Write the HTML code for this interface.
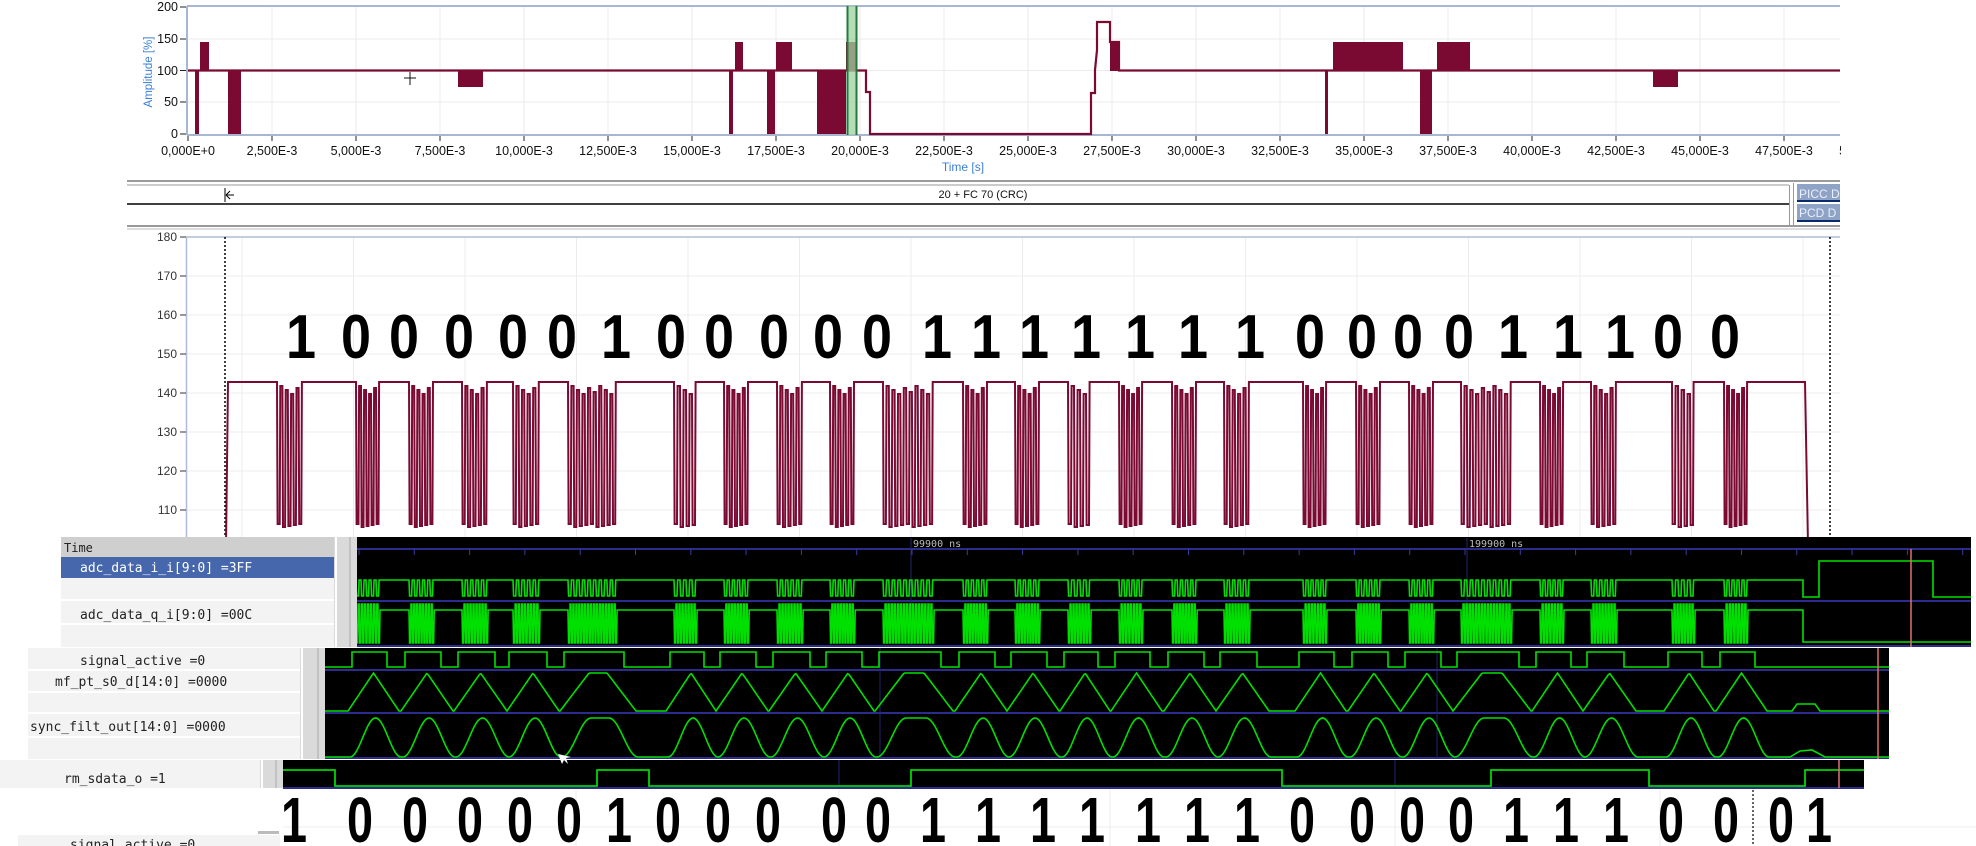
<!DOCTYPE html>
<html><head><meta charset="utf-8">
<style>
html,body{margin:0;padding:0;background:#fff;width:1976px;height:846px;overflow:hidden}
svg{display:block}
.ax{font-family:"Liberation Sans",sans-serif;font-size:12.5px;fill:#111}
.mono{font-family:"DejaVu Sans Mono","Liberation Mono",monospace;font-size:13px;fill:#222}
.big{font-family:"Liberation Sans",sans-serif;font-weight:bold;font-size:62px;fill:#000}
.big2{font-family:"Liberation Sans",sans-serif;font-weight:bold;font-size:64px;fill:#000}
</style></head>
<body>
<svg id="s" width="1976" height="846" viewBox="0 0 1976 846" xmlns="http://www.w3.org/2000/svg">
<defs>
<clipPath id="cTop"><rect x="0" y="0" width="1841" height="180"/></clipPath>
<clipPath id="cLow"><rect x="186" y="237" width="1654" height="300"/></clipPath>
<clipPath id="cP1"><rect x="357" y="549" width="1614" height="98"/></clipPath>
<clipPath id="cP2"><rect x="325" y="648" width="1564" height="111"/></clipPath>
<clipPath id="cP3"><rect x="283" y="760" width="1581" height="28"/></clipPath>
</defs>

<!-- ============ TOP CHART ============ -->
<g clip-path="url(#cTop)">
<g stroke="#ebebeb" stroke-width="1">
<line x1="188" y1="39" x2="1840" y2="39"/><line x1="188" y1="70.5" x2="1840" y2="70.5"/><line x1="188" y1="102" x2="1840" y2="102"/>
<line x1="272" y1="6" x2="272" y2="135"/><line x1="356" y1="6" x2="356" y2="135"/><line x1="440" y1="6" x2="440" y2="135"/><line x1="524" y1="6" x2="524" y2="135"/><line x1="608" y1="6" x2="608" y2="135"/><line x1="692" y1="6" x2="692" y2="135"/><line x1="776" y1="6" x2="776" y2="135"/><line x1="860" y1="6" x2="860" y2="135"/><line x1="944" y1="6" x2="944" y2="135"/><line x1="1028" y1="6" x2="1028" y2="135"/><line x1="1112" y1="6" x2="1112" y2="135"/><line x1="1196" y1="6" x2="1196" y2="135"/><line x1="1280" y1="6" x2="1280" y2="135"/><line x1="1364" y1="6" x2="1364" y2="135"/><line x1="1448" y1="6" x2="1448" y2="135"/><line x1="1532" y1="6" x2="1532" y2="135"/><line x1="1616" y1="6" x2="1616" y2="135"/><line x1="1700" y1="6" x2="1700" y2="135"/><line x1="1784" y1="6" x2="1784" y2="135"/>
</g>
<line x1="187" y1="6" x2="1840" y2="6" stroke="#a9b6d3" stroke-width="2"/>
<line x1="187" y1="135" x2="1840" y2="135" stroke="#a9b6d3" stroke-width="2"/>
<line x1="187" y1="6" x2="187" y2="135" stroke="#a9b6d3" stroke-width="2"/>
<g stroke="#222" stroke-width="1">
<line x1="180" y1="7" x2="186" y2="7"/><line x1="180" y1="39" x2="186" y2="39"/><line x1="180" y1="70.5" x2="186" y2="70.5"/><line x1="180" y1="102" x2="186" y2="102"/><line x1="180" y1="134" x2="186" y2="134"/>
<line x1="188" y1="136" x2="188" y2="141"/><line x1="272" y1="136" x2="272" y2="141"/><line x1="356" y1="136" x2="356" y2="141"/><line x1="440" y1="136" x2="440" y2="141"/><line x1="524" y1="136" x2="524" y2="141"/><line x1="608" y1="136" x2="608" y2="141"/><line x1="692" y1="136" x2="692" y2="141"/><line x1="776" y1="136" x2="776" y2="141"/><line x1="860" y1="136" x2="860" y2="141"/><line x1="944" y1="136" x2="944" y2="141"/><line x1="1028" y1="136" x2="1028" y2="141"/><line x1="1112" y1="136" x2="1112" y2="141"/><line x1="1196" y1="136" x2="1196" y2="141"/><line x1="1280" y1="136" x2="1280" y2="141"/><line x1="1364" y1="136" x2="1364" y2="141"/><line x1="1448" y1="136" x2="1448" y2="141"/><line x1="1532" y1="136" x2="1532" y2="141"/><line x1="1616" y1="136" x2="1616" y2="141"/><line x1="1700" y1="136" x2="1700" y2="141"/><line x1="1784" y1="136" x2="1784" y2="141"/>
</g>
<g class="ax" text-anchor="end">
<text x="178" y="11">200</text><text x="178" y="43">150</text><text x="178" y="75">100</text><text x="178" y="106">50</text><text x="178" y="138">0</text>
</g>
<text class="ax" transform="translate(152,72) rotate(-90)" text-anchor="middle" style="fill:#3b7fd4;font-size:11.5px">Amplitude [%]</text>
<g class="ax" text-anchor="middle">
<text x="188" y="155">0,000E+0</text><text x="272" y="155">2,500E-3</text><text x="356" y="155">5,000E-3</text><text x="440" y="155">7,500E-3</text><text x="524" y="155">10,000E-3</text><text x="608" y="155">12,500E-3</text><text x="692" y="155">15,000E-3</text><text x="776" y="155">17,500E-3</text><text x="860" y="155">20,000E-3</text><text x="944" y="155">22,500E-3</text><text x="1028" y="155">25,000E-3</text><text x="1112" y="155">27,500E-3</text><text x="1196" y="155">30,000E-3</text><text x="1280" y="155">32,500E-3</text><text x="1364" y="155">35,000E-3</text><text x="1448" y="155">37,500E-3</text><text x="1532" y="155">40,000E-3</text><text x="1616" y="155">42,500E-3</text><text x="1700" y="155">45,000E-3</text><text x="1784" y="155">47,500E-3</text><text x="1868" y="155">50,000E-3</text>
</g>
<text class="ax" x="963" y="171" text-anchor="middle" style="fill:#3b7fd4;font-size:12px">Time [s]</text>
<g fill="#7b0a32">
<rect x="195" y="70" width="4" height="64"/><rect x="200" y="42" width="9" height="29"/><rect x="228" y="70" width="13" height="64"/>
<rect x="458" y="70" width="25" height="17"/><rect x="729" y="70" width="4" height="64"/><rect x="735" y="42" width="8" height="29"/>
<rect x="767" y="70" width="8" height="64"/><rect x="776" y="42" width="16" height="29"/><rect x="817" y="70" width="29" height="64"/>
<rect x="846" y="42" width="10" height="29"/><rect x="1110" y="42" width="9" height="29"/><rect x="1325" y="70" width="3" height="64"/>
<rect x="1333" y="42" width="70" height="29"/><rect x="1420" y="70" width="12" height="64"/><rect x="1437" y="42" width="33" height="29"/>
<rect x="1653" y="70" width="25" height="17"/>
</g>
<path d="M188,70.5 H866 V92 H870 V134 H1091 V93 H1095 V70 L1097,50 V22 H1110 V42 H1119 V70.5 H1840" fill="none" stroke="#7b0a32" stroke-width="2.2"/>
<rect x="847" y="6" width="10" height="129" fill="#9fd19f" fill-opacity="0.75"/>
<line x1="847.5" y1="6" x2="847.5" y2="135" stroke="#1e7b3c" stroke-width="2"/>
<line x1="856.5" y1="6" x2="856.5" y2="135" stroke="#1e7b3c" stroke-width="2"/>
<g stroke="#111" stroke-width="1"><line x1="404" y1="78" x2="416" y2="78"/><line x1="410" y1="72" x2="410" y2="85"/></g>
</g>

<!-- ============ SEPARATOR ============ -->
<line x1="127" y1="181" x2="1840" y2="181" stroke="#9a9a9a" stroke-width="2"/>
<line x1="127" y1="185" x2="1789" y2="185" stroke="#9a9a9a" stroke-width="1"/>
<line x1="127" y1="204" x2="1789" y2="204" stroke="#000" stroke-width="1.5"/>
<line x1="127" y1="226" x2="1840" y2="226" stroke="#9a9a9a" stroke-width="2"/>
<line x1="127" y1="229" x2="1840" y2="229" stroke="#bbb" stroke-width="1"/>
<line x1="1789.5" y1="185" x2="1789.5" y2="226" stroke="#999" stroke-width="1"/>
<line x1="1793.5" y1="183" x2="1793.5" y2="226" stroke="#999" stroke-width="1"/>
<line x1="225" y1="188" x2="225" y2="202" stroke="#000" stroke-width="1"/>
<path d="M226,195 H234 M226,195 L230,191 M226,195 L230,199" stroke="#000" stroke-width="1" fill="none"/>
<text class="ax" x="983" y="198" text-anchor="middle" style="font-size:11px">20 + FC 70 (CRC)</text>
<rect x="1797" y="184" width="43" height="18" fill="#8fa3c7"/><rect x="1797" y="200" width="43" height="2" fill="#0a2a6a"/>
<rect x="1797" y="204" width="43" height="18" fill="#8fa3c7"/><rect x="1797" y="220" width="43" height="2" fill="#0a2a6a"/>
<text x="1799" y="198" style="font-family:'Liberation Sans',sans-serif;font-size:12px;fill:#e8eefb">PICC D</text>
<text x="1799" y="217" style="font-family:'Liberation Sans',sans-serif;font-size:12px;fill:#e8eefb">PCD D</text>
<rect x="1840" y="180" width="136" height="50" fill="#fff"/>

<!-- ============ LOWER CHART ============ -->
<g stroke="#ececec" stroke-width="1">
<line x1="186" y1="276" x2="1840" y2="276"/><line x1="186" y1="315" x2="1840" y2="315"/><line x1="186" y1="354" x2="1840" y2="354"/><line x1="186" y1="393" x2="1840" y2="393"/><line x1="186" y1="432" x2="1840" y2="432"/><line x1="186" y1="471" x2="1840" y2="471"/><line x1="186" y1="510" x2="1840" y2="510"/>
<line x1="242" y1="237" x2="242" y2="537"/><line x1="353.5" y1="237" x2="353.5" y2="537"/><line x1="465" y1="237" x2="465" y2="537"/><line x1="576.5" y1="237" x2="576.5" y2="537"/><line x1="688" y1="237" x2="688" y2="537"/><line x1="799.5" y1="237" x2="799.5" y2="537"/><line x1="911" y1="237" x2="911" y2="537"/><line x1="1022.5" y1="237" x2="1022.5" y2="537"/><line x1="1134" y1="237" x2="1134" y2="537"/><line x1="1245.5" y1="237" x2="1245.5" y2="537"/><line x1="1357" y1="237" x2="1357" y2="537"/><line x1="1468.5" y1="237" x2="1468.5" y2="537"/><line x1="1580" y1="237" x2="1580" y2="537"/><line x1="1691.5" y1="237" x2="1691.5" y2="537"/><line x1="1803" y1="237" x2="1803" y2="537"/>
</g>
<line x1="186" y1="237" x2="1840" y2="237" stroke="#b0bcd6" stroke-width="1.5"/>
<line x1="186.5" y1="237" x2="186.5" y2="537" stroke="#b0bcd6" stroke-width="1.5"/>
<g stroke="#333" stroke-width="1">
<line x1="180" y1="237" x2="186" y2="237"/><line x1="180" y1="276" x2="186" y2="276"/><line x1="180" y1="315" x2="186" y2="315"/><line x1="180" y1="354" x2="186" y2="354"/><line x1="180" y1="393" x2="186" y2="393"/><line x1="180" y1="432" x2="186" y2="432"/><line x1="180" y1="471" x2="186" y2="471"/><line x1="180" y1="510" x2="186" y2="510"/>
</g>
<g class="ax" text-anchor="end" style="font-size:12px;fill:#333">
<text x="177" y="241">180</text><text x="177" y="280">170</text><text x="177" y="319">160</text><text x="177" y="358">150</text><text x="177" y="397">140</text><text x="177" y="436">130</text><text x="177" y="475">120</text><text x="177" y="514">110</text>
</g>
<line x1="225" y1="237" x2="225" y2="537" stroke="#000" stroke-width="1.5" stroke-dasharray="2,2"/>
<line x1="1830" y1="237" x2="1830" y2="537" stroke="#000" stroke-width="1.5" stroke-dasharray="2,2"/>
<g class="big">
<text x="286" y="358" textLength="30" lengthAdjust="spacingAndGlyphs">1</text>
<text x="341" y="358" textLength="30" lengthAdjust="spacingAndGlyphs">0</text>
<text x="389" y="358" textLength="30" lengthAdjust="spacingAndGlyphs">0</text>
<text x="444" y="358" textLength="30" lengthAdjust="spacingAndGlyphs">0</text>
<text x="498" y="358" textLength="30" lengthAdjust="spacingAndGlyphs">0</text>
<text x="547" y="358" textLength="30" lengthAdjust="spacingAndGlyphs">0</text>
<text x="601" y="358" textLength="30" lengthAdjust="spacingAndGlyphs">1</text>
<text x="656" y="358" textLength="30" lengthAdjust="spacingAndGlyphs">0</text>
<text x="704" y="358" textLength="30" lengthAdjust="spacingAndGlyphs">0</text>
<text x="759" y="358" textLength="30" lengthAdjust="spacingAndGlyphs">0</text>
<text x="813" y="358" textLength="30" lengthAdjust="spacingAndGlyphs">0</text>
<text x="862" y="358" textLength="30" lengthAdjust="spacingAndGlyphs">0</text>
<text x="922" y="358" textLength="30" lengthAdjust="spacingAndGlyphs">1</text>
<text x="971" y="358" textLength="30" lengthAdjust="spacingAndGlyphs">1</text>
<text x="1019" y="358" textLength="30" lengthAdjust="spacingAndGlyphs">1</text>
<text x="1071" y="358" textLength="30" lengthAdjust="spacingAndGlyphs">1</text>
<text x="1125" y="358" textLength="30" lengthAdjust="spacingAndGlyphs">1</text>
<text x="1178" y="358" textLength="30" lengthAdjust="spacingAndGlyphs">1</text>
<text x="1235" y="358" textLength="30" lengthAdjust="spacingAndGlyphs">1</text>
<text x="1295" y="358" textLength="30" lengthAdjust="spacingAndGlyphs">0</text>
<text x="1347" y="358" textLength="30" lengthAdjust="spacingAndGlyphs">0</text>
<text x="1393" y="358" textLength="30" lengthAdjust="spacingAndGlyphs">0</text>
<text x="1444" y="358" textLength="30" lengthAdjust="spacingAndGlyphs">0</text>
<text x="1498" y="358" textLength="30" lengthAdjust="spacingAndGlyphs">1</text>
<text x="1553" y="358" textLength="30" lengthAdjust="spacingAndGlyphs">1</text>
<text x="1605" y="358" textLength="30" lengthAdjust="spacingAndGlyphs">1</text>
<text x="1653" y="358" textLength="30" lengthAdjust="spacingAndGlyphs">0</text>
<text x="1710" y="358" textLength="30" lengthAdjust="spacingAndGlyphs">0</text>
</g>
<g id="lowwave" clip-path="url(#cLow)"></g>

<!-- ============ WAVE PANEL 1 ============ -->
<rect x="61" y="537" width="273" height="110" fill="#f3f3f3"/>
<rect x="61" y="537" width="273" height="20" fill="#cfcfcf"/>
<text class="mono" x="64" y="552" style="font-size:12px">Time</text>
<rect x="61" y="557" width="273" height="21" fill="#4767ad"/>
<text class="mono" x="80" y="572" style="fill:#fff">adc_data_i_i[9:0] =3FF</text>
<line x1="61" y1="600" x2="334" y2="600" stroke="#fff" stroke-width="2"/>
<line x1="61" y1="624" x2="334" y2="624" stroke="#fff" stroke-width="2"/>
<text class="mono" x="80" y="619">adc_data_q_i[9:0] =00C</text>
<rect x="334" y="537" width="23" height="110" fill="#dadada"/>
<line x1="336" y1="537" x2="336" y2="647" stroke="#fff" stroke-width="2"/>
<line x1="350" y1="537" x2="350" y2="647" stroke="#aaa" stroke-width="1"/>
<rect x="357" y="537" width="1614" height="110" fill="#000"/>
<line x1="357" y1="549" x2="1971" y2="549" stroke="#2c2c8c" stroke-width="2"/>
<line x1="357" y1="601" x2="1971" y2="601" stroke="#2c2c8c" stroke-width="2"/>
<line x1="357" y1="646" x2="1971" y2="646" stroke="#2c2c8c" stroke-width="2"/>
<g id="ticks" stroke="#3a3aa0" stroke-width="1"></g>
<line x1="911" y1="538" x2="911" y2="647" stroke="#24246e" stroke-width="1"/>
<line x1="1467" y1="538" x2="1467" y2="647" stroke="#24246e" stroke-width="1"/>
<text x="913" y="547" style="font-family:'DejaVu Sans Mono',monospace;font-size:10px;fill:#bbb">99900 ns</text>
<text x="1469" y="547" style="font-family:'DejaVu Sans Mono',monospace;font-size:10px;fill:#bbb">199900 ns</text>
<g id="p1" clip-path="url(#cP1)"></g>
<line x1="1911" y1="549" x2="1911" y2="647" stroke="#e07070" stroke-width="1.5"/>

<!-- ============ WAVE PANEL 2 ============ -->
<rect x="28" y="648" width="272" height="111" fill="#f3f3f3"/>
<line x1="28" y1="670" x2="300" y2="670" stroke="#fff" stroke-width="2"/>
<line x1="28" y1="692" x2="300" y2="692" stroke="#fff" stroke-width="2"/>
<line x1="28" y1="713" x2="300" y2="713" stroke="#fff" stroke-width="2"/>
<line x1="28" y1="737" x2="300" y2="737" stroke="#fff" stroke-width="2"/>
<text class="mono" x="80" y="665">signal_active =0</text>
<text class="mono" x="55" y="686">mf_pt_s0_d[14:0] =0000</text>
<text class="mono" x="30" y="731">sync_filt_out[14:0] =0000</text>
<rect x="300" y="648" width="25" height="111" fill="#dadada"/>
<line x1="302" y1="648" x2="302" y2="759" stroke="#fff" stroke-width="2"/>
<line x1="318" y1="648" x2="318" y2="759" stroke="#aaa" stroke-width="1"/>
<rect x="325" y="648" width="1564" height="111" fill="#000"/>
<line x1="325" y1="670" x2="1889" y2="670" stroke="#2c2c8c" stroke-width="2"/>
<line x1="325" y1="713" x2="1889" y2="713" stroke="#2c2c8c" stroke-width="2"/>
<line x1="325" y1="758" x2="1889" y2="758" stroke="#2c2c8c" stroke-width="2"/>
<line x1="880" y1="648" x2="880" y2="759" stroke="#24246e" stroke-width="1"/>
<line x1="1437" y1="648" x2="1437" y2="759" stroke="#24246e" stroke-width="1"/>
<g id="p2" clip-path="url(#cP2)"></g>
<line x1="1878" y1="648" x2="1878" y2="759" stroke="#e07070" stroke-width="1.5"/>

<!-- ============ WAVE PANEL 3 ============ -->
<rect x="0" y="760" width="260" height="28" fill="#f3f3f3"/>
<text class="mono" x="64" y="783">rm_sdata_o =1</text>
<rect x="260" y="760" width="23" height="28" fill="#dadada"/>
<line x1="262" y1="760" x2="262" y2="788" stroke="#fff" stroke-width="2"/>
<line x1="276" y1="760" x2="276" y2="788" stroke="#aaa" stroke-width="1"/>
<rect x="283" y="760" width="1581" height="28" fill="#000"/>
<line x1="283" y1="788" x2="1864" y2="788" stroke="#2c2c8c" stroke-width="2"/>
<line x1="839" y1="760" x2="839" y2="788" stroke="#24246e" stroke-width="1"/>
<line x1="1395" y1="760" x2="1395" y2="788" stroke="#24246e" stroke-width="1"/>
<path clip-path="url(#cP3)" d="M283,770 H335 V786 H597 V770 H649 V786 H911 V770 H1282 V786 H1491 V770 H1649 V786 H1805 V770 H1864" fill="none" stroke="#00d400" stroke-width="1.8"/>
<line x1="1839" y1="760" x2="1839" y2="788" stroke="#e07070" stroke-width="1.5"/>
<path d="M558,754 L562,764 L564,760 L568,764 L566,758 L571,757 Z" fill="#fff"/>

<!-- ============ BOTTOM ============ -->
<line x1="283" y1="827" x2="1976" y2="827" stroke="#ececec" stroke-width="1"/>
<g stroke="#ececec" stroke-width="1">
<line x1="576" y1="790" x2="576" y2="846"/><line x1="839" y1="790" x2="839" y2="846"/><line x1="1110" y1="790" x2="1110" y2="846"/><line x1="1395" y1="790" x2="1395" y2="846"/><line x1="1660" y1="790" x2="1660" y2="846"/>
</g>
<line x1="1753" y1="790" x2="1753" y2="846" stroke="#000" stroke-width="1.2" stroke-dasharray="2,2"/>
<rect x="18" y="835" width="262" height="11" fill="#f3f3f3"/>
<rect x="258" y="831" width="21" height="3" fill="#bbb"/>
<text class="mono" x="70" y="849">signal_active =0</text>
<g class="big2">
<text x="281" y="842" textLength="26" lengthAdjust="spacingAndGlyphs">1</text>
<text x="347" y="842" textLength="26" lengthAdjust="spacingAndGlyphs">0</text>
<text x="402" y="842" textLength="26" lengthAdjust="spacingAndGlyphs">0</text>
<text x="457" y="842" textLength="26" lengthAdjust="spacingAndGlyphs">0</text>
<text x="507" y="842" textLength="26" lengthAdjust="spacingAndGlyphs">0</text>
<text x="556" y="842" textLength="26" lengthAdjust="spacingAndGlyphs">0</text>
<text x="606" y="842" textLength="26" lengthAdjust="spacingAndGlyphs">1</text>
<text x="655" y="842" textLength="26" lengthAdjust="spacingAndGlyphs">0</text>
<text x="705" y="842" textLength="26" lengthAdjust="spacingAndGlyphs">0</text>
<text x="755" y="842" textLength="26" lengthAdjust="spacingAndGlyphs">0</text>
<text x="821" y="842" textLength="26" lengthAdjust="spacingAndGlyphs">0</text>
<text x="865" y="842" textLength="26" lengthAdjust="spacingAndGlyphs">0</text>
<text x="920" y="842" textLength="26" lengthAdjust="spacingAndGlyphs">1</text>
<text x="975" y="842" textLength="26" lengthAdjust="spacingAndGlyphs">1</text>
<text x="1030" y="842" textLength="26" lengthAdjust="spacingAndGlyphs">1</text>
<text x="1079" y="842" textLength="26" lengthAdjust="spacingAndGlyphs">1</text>
<text x="1135" y="842" textLength="26" lengthAdjust="spacingAndGlyphs">1</text>
<text x="1184" y="842" textLength="26" lengthAdjust="spacingAndGlyphs">1</text>
<text x="1234" y="842" textLength="26" lengthAdjust="spacingAndGlyphs">1</text>
<text x="1289" y="842" textLength="26" lengthAdjust="spacingAndGlyphs">0</text>
<text x="1349" y="842" textLength="26" lengthAdjust="spacingAndGlyphs">0</text>
<text x="1399" y="842" textLength="26" lengthAdjust="spacingAndGlyphs">0</text>
<text x="1448" y="842" textLength="26" lengthAdjust="spacingAndGlyphs">0</text>
<text x="1503" y="842" textLength="26" lengthAdjust="spacingAndGlyphs">1</text>
<text x="1553" y="842" textLength="26" lengthAdjust="spacingAndGlyphs">1</text>
<text x="1603" y="842" textLength="26" lengthAdjust="spacingAndGlyphs">1</text>
<text x="1658" y="842" textLength="26" lengthAdjust="spacingAndGlyphs">0</text>
<text x="1713" y="842" textLength="26" lengthAdjust="spacingAndGlyphs">0</text>
<text x="1768" y="842" textLength="26" lengthAdjust="spacingAndGlyphs">0</text>
<text x="1806" y="842" textLength="26" lengthAdjust="spacingAndGlyphs">1</text>
</g>
</svg>
<script>
(function(){
var NS='http://www.w3.org/2000/svg';
function P(gid,d,stroke,w){var p=document.createElementNS(NS,'path');p.setAttribute('d',d);p.setAttribute('fill','none');p.setAttribute('stroke',stroke);p.setAttribute('stroke-width',w);p.setAttribute('stroke-linejoin','miter');document.getElementById(gid).appendChild(p);}
var H=[[228,277],[304,356],[381,409],[435,462],[489,513],[541,568],[618,674],[698,724],[750,777],[804,830],[856,883],[935,963],[989,1015],[1041,1068],[1092,1119],[1144,1172],[1198,1224],[1251,1303],[1328,1356],[1382,1409],[1435,1461],[1513,1540],[1565,1591],[1618,1672],[1696,1724],[1749,1803]];
var B=[];for(var i=0;i<H.length-1;i++)B.push([H[i][1],H[i+1][0]]);
function f(v){return v.toFixed(1);}
function sig(hiY,bHi,bLo,p0,startX,startY,jit){
 var d='M'+startX+','+startY+' L'+H[0][0]+','+hiY;
 for(var i=0;i<H.length;i++){var a=H[i][0],b=H[i][1];
  d+=' L'+(a+2)+','+hiY+' L'+b+','+hiY;
  if(i<H.length-1){var c=H[i+1][0];var n=Math.max(1,Math.round((c-b)/p0));var p=(c-b)/n;
   for(var k=0;k<n;k++){var x=b+k*p;var hy=bHi+(jit?((k*7)%5)*2:0);var ly=bLo+(jit?((k*3)%4):0);
    d+=' L'+f(x+0.6)+','+ly+' L'+f(x+p/2)+','+ly+' L'+f(x+p/2+0.6)+','+(k==n-1?hiY:hy)+' L'+f(x+p)+','+(k==n-1?hiY:hy);}
  }}
 return d;}
// analog
P('lowwave',sig(382,386,524,5.5,226,545,true)+' L1805,382 L1808,545','#7b0a32',2);
// ticks ruler
var tg=document.getElementById('ticks');for(var x=359;x<1971;x+=55.3){var l=document.createElementNS(NS,'line');l.setAttribute('x1',x);l.setAttribute('x2',x);l.setAttribute('y1',549);l.setAttribute('y2',555);tg.appendChild(l);}
// panel 1
P('p1',sig(580,580,596,5.5,357,596,false)+' L1803,580 L1803,597 L1819,597 L1819,561 L1933,561 L1933,597 L1971,597','#00e000',1.6);
P('p1',sig(610,604,643,3,357,610,false)+' L1803,610 L1803,642 L1971,642','#00e000',1.6);
// panel 2 signal_active
var d='M325,667';for(var j=0;j<B.length;j++){var a=B[j][0]-4,b=B[j][1]+6;d+=' L'+a+',667 L'+a+',652 L'+b+',652 L'+b+',667';}d+=' L1889,667';
P('p2',d,'#00e000',1.6);
function shape(bottom,top,off,smooth){var d='M325,'+bottom;var prevE=0;
 for(var j=0;j<B.length;j++){var s=B[j][0]-8+off,e=B[j][1]+18+off;if(s<prevE)s=prevE;var L=e-s;d+=' L'+f(s)+','+bottom;
  for(var t=0;t<=L;t+=1.5){var v;
   if(L<=60){ if(smooth) v=0.5-0.5*Math.cos(2*Math.PI*t/L); else v=1-Math.abs(2*t/L-1);}
   else{var r=29; if(t<r) v=smooth?0.5-0.5*Math.cos(Math.PI*t/r):t/r; else if(t>L-r) v=smooth?0.5-0.5*Math.cos(Math.PI*(L-t)/r):(L-t)/r; else v=1;}
   d+=' L'+f(s+t)+','+f(bottom-(bottom-top)*v);}
  d+=' L'+f(e)+','+bottom;prevE=e;}
 return d;}
P('p2',shape(711,673,0,false)+' L1792,711 L1797,704 L1815,704 L1820,711 L1889,711','#00e000',1.6);
P('p2',shape(757,718,2,true)+' L1790,757 L1800,751 L1812,750 L1825,757 L1889,757','#00e000',1.6);
})();
</script>
</body></html>
